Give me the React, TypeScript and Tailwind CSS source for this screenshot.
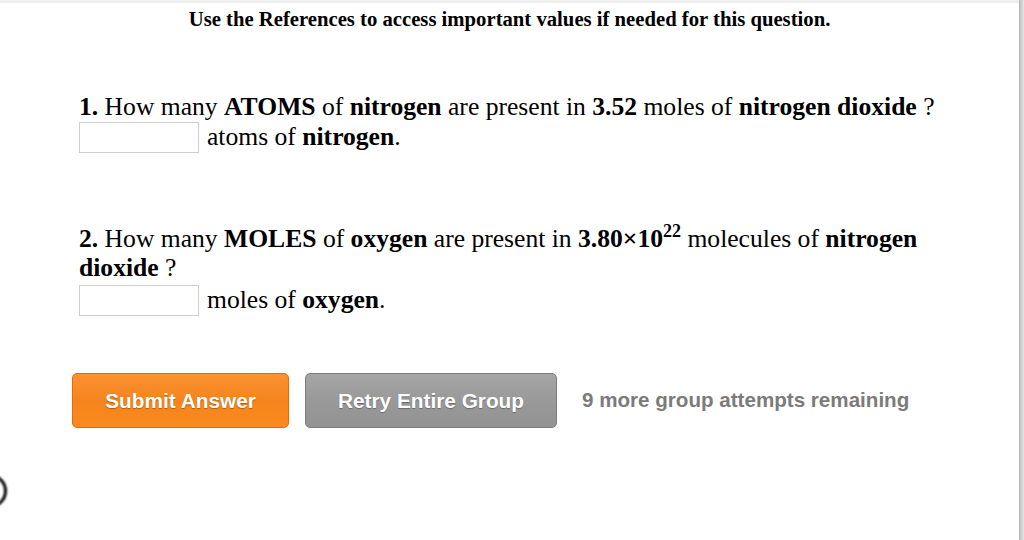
import React from 'react';

const serif = { fontFamily: '"Liberation Serif", "Times New Roman", serif' };
const sans = { fontFamily: '"Liberation Sans", Arial, Helvetica, sans-serif' };

function AnswerRow({ children }: { children: React.ReactNode }) {
  return (
    <div className="flex items-center h-[31px]">
      <input
        type="text"
        className="w-[120px] h-[31px] border border-[#cfcfcf] bg-white outline-none"
      />
      <span className="ml-[8px]">{children}</span>
    </div>
  );
}

export default function App() {
  return (
    <div className="relative w-[1024px] h-[540px] overflow-hidden bg-white flex">
      <div className="flex-1 flex flex-col">
        <div className="h-[3px] bg-[#efefef]" />
        <div className="flex-1 flex flex-col text-black" style={serif}>
          <p className="mt-[6px] text-center text-[20.7px] leading-[20px] font-bold">
            Use the References to access important values if needed for this question.
          </p>

          <div className="mt-[62px] pl-[79px] text-[25.6px]">
            <p className="leading-[31px]">
              <b>1.</b> How many <b>ATOMS</b> of <b>nitrogen</b> are present in <b>3.52</b> moles of{' '}
              <b>nitrogen dioxide</b> ?
            </p>
            <AnswerRow>
              atoms of <b>nitrogen</b>.
            </AnswerRow>
          </div>

          <div className="mt-[71px] pl-[79px] text-[25.6px]">
            <p className="leading-[29px] w-[875px]">
              <b>2.</b> How many <b>MOLES</b> of <b>oxygen</b> are present in{' '}
              <b>
                3.80×10<sup className="text-[18px] leading-none relative -top-[10px] align-baseline">22</sup>
              </b>{' '}
              molecules of <b>nitrogen dioxide</b> ?
            </p>
            <div className="mt-[3px]">
              <AnswerRow>
                moles of <b>oxygen</b>.
              </AnswerRow>
            </div>
          </div>

          <div className="mt-[57px] pl-[72px] flex items-center" style={sans}>
            <button className="w-[217px] h-[55px] rounded-[5px] border border-[#e9680c] bg-gradient-to-b from-[#fb9230] via-[#f5841c] to-[#fa8a1f] text-white font-bold text-[20.8px] [text-shadow:0_1px_1px_rgba(0,0,0,0.3)]">
              Submit Answer
            </button>
            <button className="ml-[16px] w-[252px] h-[55px] rounded-[5px] border border-[#7d7d7d] bg-gradient-to-b from-[#a6a6a6] via-[#999999] to-[#939393] text-white font-bold text-[20.8px] [text-shadow:0_1px_1px_rgba(0,0,0,0.3)]">
              Retry Entire Group
            </button>
            <span className="ml-[25px] text-[20.6px] font-bold text-[#7b7b7b]">
              9 more group attempts remaining
            </span>
          </div>
        </div>
      </div>
      <div className="w-[5px] bg-gradient-to-r from-[#b4b4b4] via-[#d0d0d0] to-[#e6e6e6]" />
      <div className="absolute left-[-27px] top-[474px] w-[34px] h-[34px] rounded-full border-[3px] border-black blur-[1px]" />
    </div>
  );
}
